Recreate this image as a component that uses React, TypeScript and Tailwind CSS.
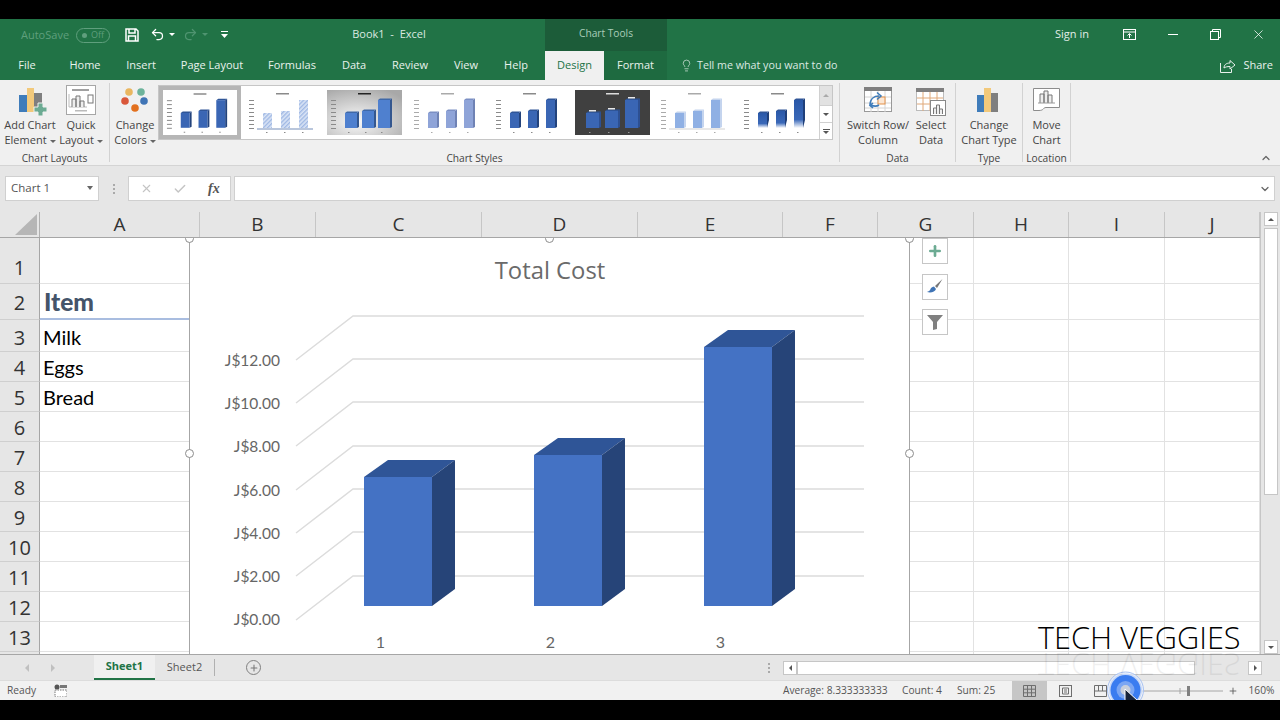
import React from "react";
import { Undo2, Redo2, Lightbulb, ChevronUp, ChevronDown, X, Check, Plus } from "lucide-react";

const tabs: [string, string][] = [
  ["File", "w-[54px]"], ["Home", "w-[62px]"], ["Insert", "w-[50px]"], ["Page Layout", "w-[92px]"],
  ["Formulas", "w-[68px]"], ["Data", "w-[56px]"], ["Review", "w-[56px]"], ["View", "w-[56px]"], ["Help", "w-[44px]"],
];
const columns: [string, string][] = [
  ["A", "w-[160px]"], ["B", "w-[116px]"], ["C", "w-[166px]"], ["D", "w-[156px]"], ["E", "w-[145px]"],
  ["F", "w-[95px]"], ["G", "w-[96px]"], ["H", "w-[95px]"], ["I", "w-[96px]"], ["J", "w-[95px]"],
];
const rows: { n: number; h: string; pb: string; text?: string; bold?: boolean }[] = [
  { n: 1, h: "h-[46px]", pb: "pb-[2px]" },
  { n: 2, h: "h-[36px]", pb: "pb-[3px]", text: "Item", bold: true },
  { n: 3, h: "h-[32px]", pb: "", text: "Milk" },
  { n: 4, h: "h-[30px]", pb: "", text: "Eggs" },
  { n: 5, h: "h-[30px]", pb: "", text: "Bread" },
  ...[6, 7, 8, 9, 10, 11, 12, 13, 14].map((n) => ({ n, h: "h-[30px]", pb: "" })),
];

type ThumbProps = {
  bg?: string; front: string; side: string; top: string; ticks?: string; title?: string;
  xs?: number[]; w?: number; fade?: boolean; hatch?: boolean; id: string; base?: string; gradient?: boolean; labels?: boolean;
};
function Thumb({ bg = "#ffffff", front, side, top, ticks = "#8a8a8a", title = "#8a8a8a", xs = [18, 36, 54], w = 9, fade, hatch, id, base, gradient, labels }: ThumbProps) {
  const tops = [23, 21, 10];
  const fill = hatch ? `url(#${id})` : fade ? `url(#${id})` : front;
  return (
    <svg width="75" height="45" viewBox="0 0 75 45">
      <defs>
        {hatch && (
          <pattern id={id} width="3" height="3" patternUnits="userSpaceOnUse" patternTransform="rotate(45)">
            <rect width="3" height="3" fill="#dbe5f6" />
            <rect width="1.4" height="3" fill="#9fb8e4" />
          </pattern>
        )}
        {fade && (
          <linearGradient id={id} x1="0" y1="0" x2="0" y2="1">
            <stop offset="0" stopColor="#2a58a8" />
            <stop offset="0.7" stopColor="#3a68b8" />
            <stop offset="1" stopColor="#ffffff" />
          </linearGradient>
        )}
        {gradient && (
          <radialGradient id={`${id}b`} cx="0.4" cy="0.7" r="0.8">
            <stop offset="0" stopColor="#fafafa" />
            <stop offset="1" stopColor="#a8a8a8" />
          </radialGradient>
        )}
      </defs>
      <rect width="75" height="45" fill={gradient ? `url(#${id}b)` : bg} />
      <rect x="31" y="3" width="13" height="1.5" fill={title} />
      {[10, 14, 18, 22, 26, 30, 34, 38].map((y) => (
        <rect key={y} x="4" y={y} width="5" height="1" fill={ticks} />
      ))}
      {base && <rect x="12" y="38" width="56" height="2" fill={base} />}
      {xs.map((x, i) => {
        const y = tops[i];
        return (
          <g key={i}>
            {!hatch && <polygon points={`${x + w},${y} ${x + w + 2},${y - 1.5} ${x + w + 2},${fade ? 30 : 37} ${x + w},38`} fill={side} />}
            {!hatch && <polygon points={`${x},${y} ${x + 2},${y - 1.5} ${x + w + 2},${y - 1.5} ${x + w},${y}`} fill={top} />}
            <rect x={x} y={y} width={w} height={38 - y} fill={fill} />
            {labels && <rect x={x + 3} y={y - 3} width={w - 6} height="1.5" fill="#e8e8e8" />}
          </g>
        );
      })}
      {xs.map((x) => <rect key={x} x={x + 3} y="42" width="1.5" height="1" fill={ticks === bg ? "#999" : ticks} />)}
    </svg>
  );
}

function RibbonButton({ icon, lines, w }: { icon: React.ReactNode; lines: React.ReactNode[]; w: string }) {
  return (
    <div className={`${w} flex flex-col items-center shrink-0`}>
      <div className="h-[32px] flex items-start justify-center">{icon}</div>
      {lines.map((l, i) => (
        <div key={i} className="h-[15px] leading-[15px] whitespace-nowrap">{l}</div>
      ))}
    </div>
  );
}
function Caret() {
  return <span className="inline-block ml-[3px] align-middle w-0 h-0 border-l-[3px] border-r-[3px] border-t-[3px] border-l-transparent border-r-transparent border-t-[#666]" />;
}
function Sep() {
  return <div className="w-px h-[79px] mt-[3px] bg-[#d2d2d2] shrink-0" />;
}
function Group({ w, label, children }: { w: string; label: string; children: React.ReactNode }) {
  return (
    <div className={`${w} h-[82px] mt-[3px] flex flex-col shrink-0`}>
      <div className="h-[68px] pt-[2px] flex">{children}</div>
      <div className="h-[14px] leading-[14px] text-center whitespace-nowrap text-[10.2px]">{label}</div>
    </div>
  );
}

function AddIcon() {
  return (
    <svg width="32" height="31" viewBox="0 0 32 31" className="ml-[3px]">
      <rect x="3" y="10" width="8" height="17" fill="#3f7cba" />
      <rect x="11" y="3" width="7" height="24" fill="#f2c97b" />
      <rect x="18" y="8" width="8" height="19" fill="#7f7f7f" />
      <path d="M22 18h5v4h4v5h-4v4h-5v-4h-4v-5h4z" fill="#6cab93" stroke="#f0f0f0" />
    </svg>
  );
}
function QuickIcon() {
  return (
    <svg width="30" height="30" viewBox="0 0 30 30">
      <rect x="0.5" y="0.5" width="29" height="29" fill="#fff" stroke="#a6a6a6" />
      <rect x="6" y="4" width="17" height="2" fill="#a0a0a0" />
      <path d="M3 9v13h18" fill="none" stroke="#bbb" />
      <path d="M6 22v-8h4v8M10 22V11h4v11M14 22v-6h4v6" fill="#eee" stroke="#777" />
      <rect x="22" y="10" width="5" height="8" fill="#fff" stroke="#777" />
      <rect x="9" y="25" width="12" height="1.5" fill="#bbb" />
    </svg>
  );
}
function ColorsIcon() {
  return (
    <svg width="30" height="28" viewBox="0 0 30 28" className="mt-[2px]">
      <circle cx="9" cy="5" r="3.8" fill="#e9b65f" />
      <circle cx="21" cy="5" r="3.8" fill="#6db39b" />
      <circle cx="5" cy="14" r="3.8" fill="#d9573a" />
      <circle cx="24" cy="14" r="3.8" fill="#3f74b5" />
      <circle cx="15" cy="21" r="3.8" fill="#e2701e" />
    </svg>
  );
}
function SwitchIcon() {
  return (
    <svg width="28" height="26" viewBox="0 0 28 26" className="mt-[2px] -ml-[1px]">
      <rect x="0.5" y="0.5" width="27" height="24" fill="#fff" stroke="#999" />
      <rect x="0" y="0" width="28" height="4" fill="#7f7f7f" />
      <path d="M1 10h26M1 16h26M1 21h26M7 4v21M14 4v21M21 4v21" stroke="#d4d4d4" />
      <rect x="14" y="10" width="7" height="7" fill="#fbe7d4" stroke="#e2914a" />
      <path d="M6 18c0-6 4-9 9-9M13 5.500 17 9l-4 3.500M15 18c-3 2-6 1-8 0M9 16l-3 2.500 3 2.500" fill="none" stroke="#3f7cba" strokeWidth="1.6" />
    </svg>
  );
}
function SelectIcon() {
  return (
    <svg width="30" height="28" viewBox="0 0 30 28" className="mt-[3px]">
      <rect x="0.5" y="0.5" width="27" height="22" fill="#fff" stroke="#bbb" />
      <rect width="28" height="4" fill="#7f7f7f" />
      <path d="M1 10h26M1 16h26M7 4v19M14 4v19M21 4v19" stroke="#e0a878" />
      <rect x="14.500" y="12.500" width="15" height="15" fill="#fff" stroke="#888" />
      <path d="M17.500 26v-6h3v6M20.500 26v-9h3v9M23.500 26v-5h3v5" fill="#eee" stroke="#777" />
    </svg>
  );
}
function ChangeTypeIcon() {
  return (
    <svg width="30" height="28" viewBox="0 0 30 28" className="mt-[1px]">
      <rect x="3" y="9" width="7" height="17" fill="#3f7cba" />
      <rect x="10" y="2" width="7" height="24" fill="#f2c97b" />
      <rect x="17" y="7" width="7" height="19" fill="#7f7f7f" />
    </svg>
  );
}
function MoveIcon() {
  return (
    <svg width="28" height="27" viewBox="0 0 28 27" className="mt-[3px]">
      <path d="M0.5 0.5h26v19H13c-3 0-2 3-7 3H0.5z" fill="#fff" stroke="#8c8c8c" />
      <path d="M7 15v-9h4v9M11 15V3h4v12M15 15V7h4v8" fill="#eee" stroke="#777" />
      <path d="M5 15h17" stroke="#999" />
    </svg>
  );
}

function ChartSvg() {
  const grid = [316, 359, 402, 446, 489, 532, 576];
  const labels = ["J$12.00", "J$10.00", "J$8.00", "J$6.00", "J$4.00", "J$2.00", "J$0.00"];
  const bars: [number, number, number][] = [[364, 477, 460], [534, 455, 438], [704, 347, 330]];
  return (
    <svg width="719" height="416" viewBox="190 238 719 416" className="block">
      <text x="550" y="279" textAnchor="middle" fontSize="23.8" fill="#6a6a6a" fontFamily="'Open Sans', sans-serif">Total Cost</text>
      {grid.map((y) => (
        <g key={y} stroke="#dcdcdc" strokeWidth="1.5" fill="none">
          <path d={`M296 ${y + 44}L353 ${y}H864`} />
        </g>
      ))}
      {labels.map((l, i) => (
        <text key={l} x="280" y={366 + i * 43.2} textAnchor="end" fontSize="15.5" fill="#666666" fontFamily="'Lato', sans-serif">{l}</text>
      ))}
      {bars.map(([x, y, t]) => (
        <g key={x}>
          <polygon points={`${x},${y} ${x + 24},${t} ${x + 91},${t} ${x + 68},${y}`} fill="#2f5597" />
          <polygon points={`${x + 68},${y} ${x + 91},${t} ${x + 91},589 ${x + 68},606`} fill="#264478" />
          <rect x={x} y={y} width="68" height={606 - y} fill="#4472c4" />
        </g>
      ))}
      {([["1", 380.5], ["2", 550.5], ["3", 720.5]] as [string, number][]).map(([t, x]) => (
        <text key={t} x={x} y="648" textAnchor="middle" fontSize="16" fill="#666666" fontFamily="'Lato', sans-serif">{t}</text>
      ))}
    </svg>
  );
}

function Handle({ pos }: { pos: string }) {
  return <div className={`absolute ${pos} w-[9px] h-[9px] rounded-full bg-white border border-[#8c8c8c]`} />;
}

export default function App() {
  return (
    <div className="relative w-[1280px] h-[720px] overflow-hidden bg-black text-[11px] text-[#444]" style={{ fontFamily: "'Open Sans', 'Noto Sans', sans-serif" }}>
      <div className="h-[19px]" />
      {/* title bar */}
      <div className="h-[32px] bg-[#217346] flex items-center pb-[2px] text-[#d5e6dc]">
        <span className="ml-[21px] w-[47px] mt-[2px] text-[#5f9f7d] whitespace-nowrap">AutoSave</span>
        <div className="ml-[8px] mt-[2px] w-[34px] h-[15px] rounded-full border border-[#5f9f7d] flex items-center pl-[5px] gap-[4px] text-[9px] text-[#5f9f7d]">
          <span className="w-[5px] h-[5px] rounded-full bg-[#5f9f7d]" />
          <span>Off</span>
        </div>
        <svg className="ml-[15px] mt-[1px]" width="14" height="14" viewBox="0 0 14 14" fill="none" stroke="#fff" strokeWidth="1.5">
          <path d="M1 1h10l2 2v10H1zM4 1v4h6V1M3.500 13V8h7v5" />
        </svg>
        <Undo2 className="ml-[11px] mt-[1px]" size={15} color="#fff" strokeWidth={2} />
        <span className="ml-[4px] mt-[1px] w-0 h-0 border-l-[3px] border-r-[3px] border-t-[3px] border-l-transparent border-r-transparent border-t-[#fff]" />
        <Redo2 className="ml-[8px] mt-[1px]" size={15} color="#4f9470" strokeWidth={2} />
        <span className="ml-[4px] mt-[1px] w-0 h-0 border-l-[3px] border-r-[3px] border-t-[3px] border-l-transparent border-r-transparent border-t-[#4f9470]" />
        <svg className="ml-[13px] mt-[1px]" width="7" height="8" viewBox="0 0 7 8" fill="#fff"><rect y="0" width="7" height="1" /><path d="M0 3h7L3.500 7z" /></svg>
        <div className="w-[317px] pl-[5px] text-center whitespace-pre text-[#dbe9e1]">Book1  -  Excel</div>
        <div className="w-[122px] h-[32px] self-start bg-[#1c5c39] flex items-center justify-center pb-[2px] text-[#a9cdb9] text-[10.2px]">Chart Tools</div>
        <div className="flex-1" />
        <div className="w-[70px] text-center text-[#e3eee8]">Sign in</div>
        <div className="ml-px w-[43px] flex justify-center">
          <svg width="13" height="11" viewBox="0 0 13 11" fill="none" stroke="#fff"><rect x="0.5" y="0.5" width="12" height="10" /><path d="M0.5 3h12M6.500 9V5M4.500 6.500l2-2 2 2" /></svg>
        </div>
        <div className="w-[43px] flex justify-center"><div className="w-[10px] h-px bg-white" /></div>
        <div className="w-[43px] flex justify-center">
          <svg width="11" height="11" viewBox="0 0 11 11" fill="none" stroke="#fff"><rect x="0.5" y="2.500" width="8" height="8" /><path d="M2.500 2.500v-2h8v8h-2" /></svg>
        </div>
        <div className="w-[43px] flex justify-center"><X size={15} color="#fff" strokeWidth={1.2} /></div>
      </div>
      {/* tab row */}
      <div className="h-[29px] bg-[#217346] flex text-[#e9f2ed]">
        {tabs.map(([t, w]) => (
          <div key={t} className={`${w} h-full flex items-center justify-center whitespace-nowrap`}>{t}</div>
        ))}
        <div className="w-[7px]" />
        <div className="w-[59px] h-full bg-[#f0f0f0] text-[#217346] flex items-center justify-center">Design</div>
        <div className="w-[63px] h-full bg-[#1e6a40] flex items-center justify-center">Format</div>
        <div className="ml-[13px] flex items-center gap-[4px] text-[#dce9e2]">
          <Lightbulb size={13} strokeWidth={1.3} />
          <span className="whitespace-nowrap text-[10.7px]">Tell me what you want to do</span>
        </div>
        <div className="ml-auto pr-[7px] flex items-center gap-[7px]">
          <svg width="16" height="14" viewBox="0 0 16 14" fill="none" stroke="#e9f2ed"><path d="M.5 4v9.500h11V10M4 9c0-3 2-5 6-5V1.500L15 6l-5 4V7.500C7 7.500 5.500 8 4 9z" /></svg>
          <span>Share</span>
        </div>
      </div>
      {/* ribbon */}
      <div className="h-[86px] bg-[#f0f0f0] border-b border-[#d4d4d4] flex relative">
        <Group w="w-[109px]" label="Chart Layouts">
          <div className="w-[2px]" />
          <RibbonButton w="w-[56px]" icon={<AddIcon />} lines={["Add Chart", <>Element<Caret /></>]} />
          <RibbonButton w="w-[46px]" icon={<QuickIcon />} lines={["Quick", <>Layout<Caret /></>]} />
        </Group>
        <Sep />
        <Group w="w-[729px]" label="Chart Styles">
          <div className="w-[2px]" />
          <RibbonButton w="w-[46px]" icon={<ColorsIcon />} lines={["Change", <>Colors<Caret /></>]} />
          <div className="w-[675px] h-[55px] flex border border-[#c6c6c6] bg-white shrink-0">
            <div className="w-[660px] flex items-center">
              <div className="w-[82px] h-[53px] border-[4px] border-[#b6b6b6] flex items-center justify-center shrink-0 overflow-hidden">
                <Thumb id="t1" front="#3a66b4" side="#23437c" top="#2f5597" />
              </div>
              <div className="w-[82px] flex justify-center shrink-0"><Thumb id="t2" hatch front="#8faadc" side="#8faadc" top="#8faadc" base="#b9c6dc" /></div>
              <div className="w-[83px] flex justify-center shrink-0"><Thumb id="t3" gradient xs={[18, 35, 51]} w={12} front="#4f80cf" side="#34578f" top="#3f68a8" title="#222" /></div>
              <div className="w-[82px] flex justify-center shrink-0"><Thumb id="t4" front="#8fa4d8" side="#6f82b4" top="#7b8fc4" ticks="#aaa" title="#aaa" /></div>
              <div className="w-[83px] flex justify-center shrink-0"><Thumb id="t5" front="#3a66b4" side="#23437c" top="#2f5597" /></div>
              <div className="w-[82px] flex justify-center shrink-0"><Thumb id="t6" bg="#404040" xs={[11, 30, 50]} w={13} labels front="#3a66b4" side="#2d5092" top="#2f5597" ticks="#404040" title="#ddd" /></div>
              <div className="w-[83px] flex justify-center shrink-0"><Thumb id="t7" front="#8fb0e4" side="#c4d4ee" top="#c4d4ee" ticks="#aaa" title="#aaa" base="#e8e8e8" /></div>
              <div className="w-[82px] flex justify-center shrink-0"><Thumb id="t8" fade front="#2a58a8" side="#1f3f7a" top="#2f5597" /></div>
            </div>
            <div className="flex-1 border-l border-[#d0d0d0] flex flex-col">
              <div className="h-[20px] bg-[#e2e2e2] border-b border-[#d0d0d0] flex items-center justify-center"><span className="w-0 h-0 border-l-[3px] border-r-[3px] border-b-[3px] border-l-transparent border-r-transparent border-b-[#aaa]" /></div>
              <div className="h-[17px] border-b border-[#d0d0d0] flex items-center justify-center"><span className="w-0 h-0 border-l-[3px] border-r-[3px] border-t-[3px] border-l-transparent border-r-transparent border-t-[#555]" /></div>
              <div className="flex-1 flex flex-col items-center justify-center gap-[1px]"><span className="w-[7px] h-px bg-[#555]" /><span className="w-0 h-0 border-l-[3px] border-r-[3px] border-t-[3px] border-l-transparent border-r-transparent border-t-[#555]" /></div>
            </div>
          </div>
        </Group>
        <Sep />
        <Group w="w-[115px]" label="Data">
          <div className="w-[6px]" />
          <RibbonButton w="w-[64px]" icon={<SwitchIcon />} lines={["Switch Row/", "Column"]} />
          <RibbonButton w="w-[42px]" icon={<SelectIcon />} lines={["Select", "Data"]} />
        </Group>
        <Sep />
        <Group w="w-[66px]" label="Type">
          <RibbonButton w="w-[66px]" icon={<ChangeTypeIcon />} lines={["Change", "Chart Type"]} />
        </Group>
        <Sep />
        <Group w="w-[47px]" label="Location">
          <RibbonButton w="w-[47px]" icon={<MoveIcon />} lines={["Move", "Chart"]} />
        </Group>
        <Sep />
        <ChevronUp className="ml-auto mr-[8px] self-end mb-[1px]" size={12} color="#666" strokeWidth={2.5} />
      </div>
      {/* formula bar */}
      <div className="h-[46px] bg-[#e6e6e6] flex pt-[10px] pb-[11px]">
        <div className="ml-[5px] w-[94px] bg-white border border-[#d0d0d0] flex items-center justify-between pl-[5px] pr-[5px] pb-[1px] text-[#555] text-[11.5px]">
          <span>Chart 1</span>
          <span className="w-0 h-0 border-l-[3px] border-r-[3px] border-t-[4px] border-l-transparent border-r-transparent border-t-[#666]" />
        </div>
        <div className="w-[29px] flex flex-col items-center justify-center gap-[2px]">
          <span className="w-[2px] h-[2px] bg-[#aaa]" /><span className="w-[2px] h-[2px] bg-[#aaa]" /><span className="w-[2px] h-[2px] bg-[#aaa]" />
        </div>
        <div className="w-[103px] bg-white border border-[#d0d0d0] flex items-center">
          <X className="ml-[11px]" size={13} color="#c4c4c4" strokeWidth={2} />
          <Check className="ml-[20px]" size={14} color="#c4c4c4" strokeWidth={2.5} />
          <span className="ml-[21px] italic text-[#555] text-[14px] font-bold" style={{ fontFamily: "'Liberation Serif', serif" }}>fx</span>
        </div>
        <div className="ml-[3px] w-[1041px] bg-white border border-[#d0d0d0] flex items-center justify-end pr-[3px]">
          <ChevronDown size={12} color="#666" strokeWidth={2.5} />
        </div>
      </div>
      {/* sheet */}
      <div className="flex h-[442px]">
        <div className="w-[1260px] shrink-0 flex flex-col bg-white">
          <div className="h-[26px] bg-[#e6e6e6] border-b border-[#a6a6a6] flex text-[19px] text-[#333]">
            <div className="w-[40px] border-r border-[#b0b0b0] relative shrink-0 overflow-hidden">
              <svg className="absolute left-[15px] top-[2px]" width="22" height="21"><polygon points="22,0 22,21 0,21" fill="#b6b6b6" /></svg>
            </div>
            {columns.map(([c, w]) => (
              <div key={c} className={`${w} shrink-0 border-r border-[#c6c6c6] flex items-center justify-center leading-none`}>{c}</div>
            ))}
          </div>
          <div className="relative h-[416px] overflow-hidden">
            {rows.map((r) => (
              <div key={r.n} className={`${r.h} flex`}>
                <div className={`w-[40px] shrink-0 bg-[#e6e6e6] border-r border-b border-r-[#a6a6a6] border-b-[#cfcfcf] flex items-end justify-center text-[20px] leading-[26px] text-[#333] ${r.pb}`}>{r.n < 14 ? r.n : ""}</div>
                {columns.map(([c, w], i) => (
                  <div key={c} className={`${w} shrink-0 border-r border-b border-[#e2e2e2] ${i === 0 && r.bold ? "border-b-2 border-b-[#a9bde0]" : ""} flex items-end pl-[3px] ${r.pb} whitespace-nowrap`}>
                    {i === 0 && r.text && (
                      <span className={r.bold ? "text-[24.5px] leading-[26px] ml-[1px] font-black text-[#44546a]" : "text-[20px] leading-[28px] text-black"} style={{ fontFamily: "'Lato', sans-serif" }}>{r.text}</span>
                    )}
                  </div>
                ))}
              </div>
            ))}
            {/* chart object */}
            <div className="absolute left-[189px] top-0 w-[721px] h-[416px] bg-white border-x border-[#a6a6a6]">
              <ChartSvg />
            </div>
            <Handle pos="left-[185px] top-[-4px]" />
            <Handle pos="left-[545px] top-[-4px]" />
            <Handle pos="left-[905px] top-[-4px]" />
            <Handle pos="left-[185px] top-[211px]" />
            <Handle pos="left-[905px] top-[211px]" />
            <div className="absolute left-[922px] top-0 w-[26px] h-[26px] bg-white border border-[#c6c6c6] flex items-center justify-center"><Plus size={16} color="#6cab93" strokeWidth={4} /></div>
            <div className="absolute left-[922px] top-[36px] w-[26px] h-[26px] bg-white border border-[#c6c6c6] flex items-center justify-center">
              <svg width="18" height="18" viewBox="0 0 18 18"><path d="M16.500 1 9 8l2 2z" fill="#777" /><path d="M8 8.500 10 11c-1 3-5 4-9 3 3-1 3-2 4-4 1-1 2-1.500 3-1.500z" fill="#3f74b5" /></svg>
            </div>
            <div className="absolute left-[922px] top-[71px] w-[26px] h-[26px] bg-white border border-[#c6c6c6] flex items-center justify-center">
              <svg width="18" height="18" viewBox="0 0 18 18"><path d="M1 2h16l-6 7v7l-4 1V9z" fill="#808080" /></svg>
            </div>
          </div>
        </div>
        {/* vertical scrollbar */}
        <div className="w-[20px] bg-[#e6e6e6] border-l border-[#c6c6c6] flex flex-col items-center">
          <div className="w-[14px] h-[14px] bg-white border border-[#c6c6c6] flex items-center justify-center"><span className="w-0 h-0 border-l-[3px] border-r-[3px] border-b-[3px] border-l-transparent border-r-transparent border-b-[#555]" /></div>
          <div className="mt-[2px] w-[14px] h-[267px] bg-white border border-[#c6c6c6]" />
          <div className="flex-1" />
          <div className="w-[14px] h-[14px] bg-white border border-[#c6c6c6] flex items-center justify-center"><span className="w-0 h-0 border-l-[3px] border-r-[3px] border-t-[3px] border-l-transparent border-r-transparent border-t-[#555]" /></div>
        </div>
      </div>
      {/* sheet tabs */}
      <div className="h-[26px] bg-[#e6e6e6] border-t border-[#a6a6a6] flex items-stretch text-[11px]">
        <div className="w-[94px] flex items-center pl-[25px] gap-[22px] shrink-0">
          <span className="w-0 h-0 border-t-[4px] border-b-[4px] border-r-[4px] border-t-transparent border-b-transparent border-r-[#c0c0c0]" />
          <span className="w-0 h-0 border-t-[4px] border-b-[4px] border-l-[4px] border-t-transparent border-b-transparent border-l-[#c0c0c0]" />
        </div>
        <div className="w-[61px] bg-[#f0f0f0] border-b-2 border-[#217346] text-[#217346] font-bold flex items-center justify-center shrink-0">Sheet1</div>
        <div className="w-[60px] border-r border-[#b0b0b0] my-[4px] flex items-center justify-center shrink-0 text-[#555]">Sheet2</div>
        <div className="ml-[31px] w-[15px] h-[15px] self-center rounded-full border border-[#808080] flex items-center justify-center shrink-0"><Plus size={10} color="#777" strokeWidth={2.5} /></div>
        <div className="ml-[506px] w-[3px] flex flex-col items-center justify-center gap-[2px] shrink-0">
          <span className="w-[2px] h-[2px] bg-[#aaa]" /><span className="w-[2px] h-[2px] bg-[#aaa]" /><span className="w-[2px] h-[2px] bg-[#aaa]" />
        </div>
        <div className="ml-[13px] w-[14px] h-[14px] self-center bg-white border border-[#c6c6c6] flex items-center justify-center shrink-0"><span className="w-0 h-0 border-t-[3px] border-b-[3px] border-r-[3px] border-t-transparent border-b-transparent border-r-[#555]" /></div>
        <div className="w-[398px] h-[14px] self-center bg-white border border-[#c6c6c6] shrink-0" />
        <div className="ml-[53px] w-[14px] h-[14px] self-center bg-white border border-[#c6c6c6] flex items-center justify-center shrink-0"><span className="w-0 h-0 border-t-[3px] border-b-[3px] border-l-[3px] border-t-transparent border-b-transparent border-l-[#555]" /></div>
      </div>
      {/* status bar */}
      <div className="h-[20px] bg-[#f1f1f1] border-t border-[#dcdcdc] flex items-center text-[10.2px] text-[#555] whitespace-nowrap">
        <span className="ml-[7px] w-[47px]">Ready</span>
        <svg width="13" height="13" viewBox="0 0 13 13"><circle cx="3" cy="3" r="2.500" fill="#555" /><rect x="6" y="1" width="7" height="3" fill="#777" /><path d="M1 6h12v7H1z" fill="#fff" stroke="#777" strokeDasharray="1.500 1" /></svg>
        <div className="w-[716px]" />
        <span className="w-[119px]">Average: 8.333333333</span>
        <span className="w-[55px]">Count: 4</span>
        <span className="w-[55px]">Sum: 25</span>
        <div className="w-[35px] h-full bg-[#c6c6c6] flex items-center justify-center">
          <svg width="13" height="12" viewBox="0 0 13 12" fill="none" stroke="#6e6e6e"><path d="M.5.500h12v11H.5zM4.500.500v11M8.500.500v11M.5 4.200h12M.5 7.800h12" /></svg>
        </div>
        <div className="w-[36px] flex justify-center">
          <svg width="13" height="12" viewBox="0 0 13 12" fill="none" stroke="#6e6e6e"><rect x=".5" y=".5" width="12" height="11" /><path d="M3.500 3h6v6h-6zM5 5h3M5 7h3" /></svg>
        </div>
        <div className="w-[35px] flex justify-center">
          <svg width="13" height="12" viewBox="0 0 13 12" fill="none" stroke="#6e6e6e"><path d="M.5 .5h12v11H.5zM.5 6h12M4.500 .5V6M8.500 .5V6" /></svg>
        </div>
        <svg width="107" height="12" viewBox="0 0 107 12"><path d="M2 6H105" stroke="#a6a6a6" /><path d="M62 3v6" stroke="#a6a6a6" /><rect x="69" y="1" width="3" height="10" fill="#808080" /></svg>
        <div className="w-[16px] flex justify-center"><Plus size={10} color="#555" strokeWidth={2} /></div>
        <div className="flex-1 text-center pl-[2px]">160%</div>
      </div>
      {/* click ripple and pointer */}
      <svg className="absolute left-[1102px] top-[668px]" width="48" height="32" viewBox="1102 668 48 32">
        <circle cx="1125.500" cy="690" r="18" fill="#eef3fd" fillOpacity="0.6" stroke="#a9c3f2" strokeWidth="1" />
        <circle cx="1125.500" cy="690" r="16.500" fill="#c6d8f8" />
        <circle cx="1125.500" cy="690" r="15" fill="#3a7cf0" />
        <circle cx="1125.500" cy="690" r="9" fill="#7ba6f3" />
        <circle cx="1125.500" cy="690" r="5" fill="#c9d0dc" />
        <path d="M1125 689v16l4-3.500 3 6 3-1-3-6h5.500z" fill="#17233a" stroke="#fff" strokeWidth="1" />
      </svg>
      {/* watermark */}
      <div className="absolute left-[1038px] top-[617px] text-[30.7px] leading-[40px] font-light text-black whitespace-nowrap">TECH VEGGIES</div>
      <div className="absolute left-[1038px] top-[645px] text-[30.7px] leading-[40px] font-light text-black whitespace-nowrap -scale-y-100 opacity-[0.06]">TECH VEGGIES</div>
    </div>
  );
}
